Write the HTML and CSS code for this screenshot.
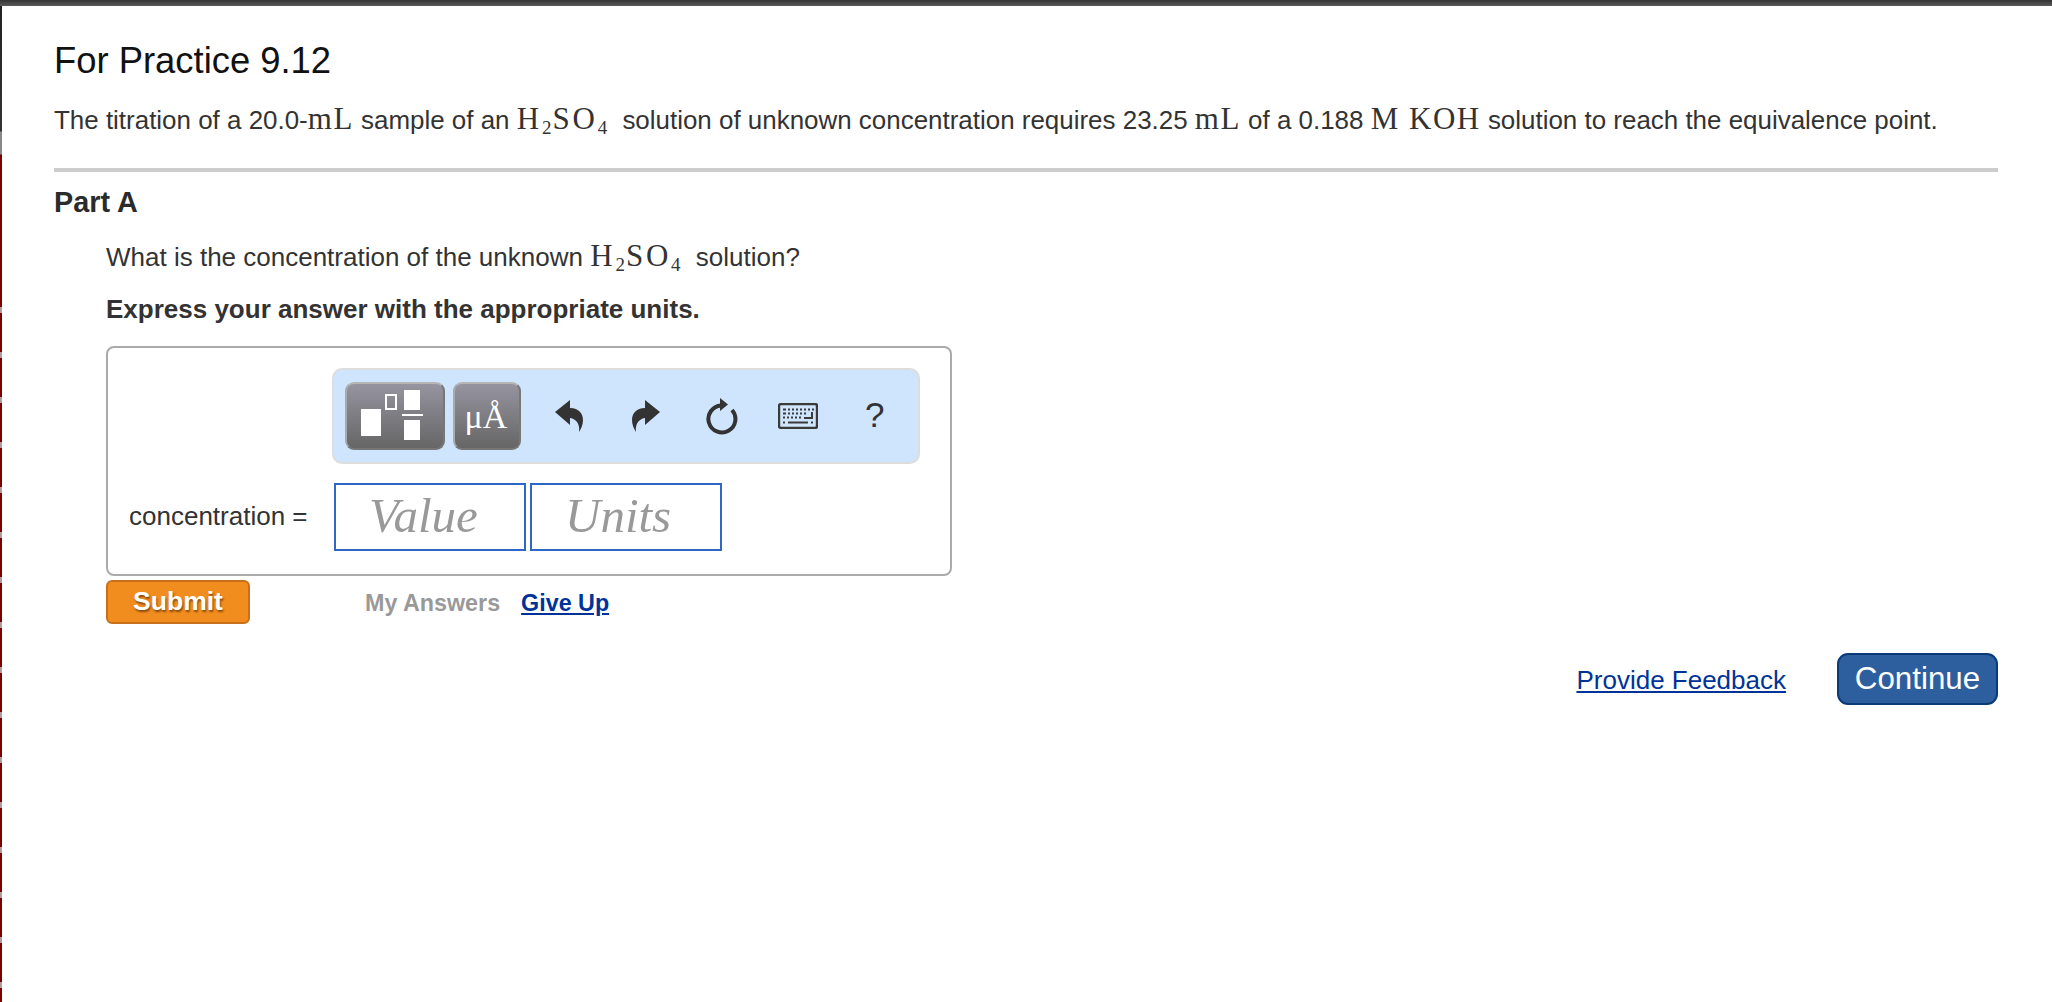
FILE: index.html
```html
<!DOCTYPE html>
<html lang="en">
<head>
<meta charset="utf-8">
<title>For Practice 9.12</title>
<link rel="stylesheet" href="styles.css">
</head>
<body>
<div class="topbar"></div>
<div class="shell">
  <div class="edge"></div>
  <main class="main">
    <h1 class="title">For Practice 9.12</h1>
    <p class="intro">The titration of a 20.0-<span class="m">mL</span> sample of an <span class="m f">H<sub>2</sub>SO<sub>4</sub></span> solution of unknown concentration requires 23.25 <span class="m">mL</span> of a 0.188 <span class="m">M KOH</span> solution to reach the equivalence point.</p>
    <hr class="rule">
    <h2 class="part">Part A</h2>
    <section class="question">
      <p class="ask">What is the concentration of the unknown <span class="m f">H<sub>2</sub>SO<sub>4</sub></span> solution?</p>
      <p class="express">Express your answer with the appropriate units.</p>
      <div class="answer">
        <div class="toolbar">
          <div class="tbtn tbtn-wide">
            <svg width="96" height="64" viewBox="0 0 96 64"><rect x="14" y="25" width="20" height="27" fill="#fff"/><rect x="39" y="11" width="10" height="14" fill="none" stroke="#fff" stroke-width="2"/><rect x="57" y="6" width="16" height="20" fill="#fff"/><rect x="55" y="30" width="21" height="2" fill="#fff"/><rect x="57" y="36" width="16" height="20" fill="#fff"/></svg>
          </div>
          <div class="tbtn tbtn-unit">μÅ</div>
          <svg class="ic ic-undo" width="30" height="34" viewBox="0 0 30 34"><path d="M1 13 16 1v8c9 0 13 6 13 12 0 5-2 9-4 12 1-7-2-13-9-14v7z" fill="#333"/></svg>
          <svg class="ic ic-redo" width="30" height="34" viewBox="0 0 30 34"><path d="M29 13 14 1v8C5 9 1 15 1 21c0 5 2 9 4 12-1-7 2-13 9-14v7z" fill="#333"/></svg>
          <svg class="ic ic-reset" width="36" height="40" viewBox="0 0 36 40"><path d="M29 14A13.5 13.5 0 1 1 18 9.5" fill="none" stroke="#333" stroke-width="4"/><path d="M17 2l8 6.5-8 6.5z" fill="#333"/></svg>
          <svg class="ic ic-kbd" width="40" height="26" viewBox="0 0 40 26"><rect x="1" y="1" width="38" height="24" rx="2" fill="#cfe4fd" stroke="#3a3a3a" stroke-width="2.4"/><path d="M5 6.5h3M10 6.5h2M14 6.5h2M18 6.5h2M22 6.5h2M26 6.5h2M30 6.5h2M34 6.5h2M5 10.5h3M10 10.5h2M14 10.5h2M18 10.5h2M22 10.5h2M26 10.5h2M5 14.5h2M9 14.5h2M13 14.5h2M17 14.5h2M21 14.5h2M34 9v6h-8M5 19.5h2M10 19.5h20M33 19.5h2" stroke="#3a3a3a" stroke-width="2" fill="none"/></svg>
          <span class="help">?</span>
        </div>
        <div class="entry">
          <span class="label">concentration =</span>
          <span class="field">Value</span>
          <span class="field">Units</span>
        </div>
      </div>
      <div class="actions">
        <button class="submit" type="button">Submit</button>
        <span class="myanswers">My Answers</span>
        <a class="giveup" href="#">Give Up</a>
      </div>
    </section>
    <div class="footer">
      <a class="feedback" href="#">Provide Feedback</a>
      <button class="continue" type="button">Continue</button>
    </div>
  </main>
</div>
</body>
</html>
```

FILE: styles.css
```css
* { box-sizing: border-box; }
html, body { margin: 0; padding: 0; height: 1002px; overflow: hidden; background: #fff; }
body { font-family: "Liberation Sans", Arial, sans-serif; color: #333; }
.topbar { height: 6px; background: linear-gradient(#333, #5a5a5a); }
.shell { display: flex; height: 996px; }
.edge {
  width: 2px; flex: none;
  background:
    repeating-linear-gradient(#7a0000 0, #7a0000 39px, #b09a9a 39px, #b09a9a 45px) 0 262px / 2px 100% no-repeat,
    linear-gradient(#222 0, #333 125px, #888 126px, #888 148px, #7a0000 149px, #7a0000 100%);
}
.main { flex: 1; padding: 0 54px 0 52px; display: flex; flex-direction: column; align-items: stretch; }
.title { margin: 34px 0 0; font-size: 36.4px; line-height: 42px; font-weight: 400; color: #111; }
.intro { margin: 20px 0 0; font-size: 25.95px; line-height: 34px; white-space: nowrap; }
.m { font-family: "Liberation Serif", serif; font-size: 31px; letter-spacing: 1.5px; }
.m sub { font-size: 19px; line-height: 0; vertical-align: -5px; letter-spacing: 1px; }
.f { padding-right: 7px; letter-spacing: 2.8px; }
.rule { margin: 31px 0 0; border: 0; height: 4px; background: #ccc; }
.part { margin: 14px 0 0; font-size: 28.8px; line-height: 32px; font-weight: 700; color: #2b2b2b; }
.question { padding-left: 52px; }
.ask { margin: 21px 0 0; font-size: 26px; line-height: 34px; white-space: nowrap; }
.express { margin: 18px 0 0; font-size: 26px; line-height: 34px; font-weight: 700; }
.answer { margin-top: 20px; width: 846px; height: 230px; border: 2px solid #aaa; border-radius: 8px; padding: 20px 0 0 21px; }
.toolbar { margin-left: 203px; width: 588px; height: 96px; background: #cfe4fd; border: 2px solid #ddd; border-radius: 10px; display: flex; align-items: center; padding: 0 0 0 11px; }
.tbtn { height: 68px; border-radius: 9px; background: linear-gradient(#96949f, #666); border: 2px solid; border-color: #b5b5b5 #777 #777 #aaa; color: #fff; display: flex; align-items: center; justify-content: center; flex: none; }
.tbtn-wide { width: 100px; }
.tbtn-unit { width: 68px; margin-left: 8px; padding-right: 2px; font-family: "Liberation Serif", serif; font-size: 34px; line-height: 1; padding-top: 2px; }
.ic { flex: none; display: block; }
.ic-undo { margin-left: 33px; }
.ic-redo { margin-left: 47px; }
.ic-reset { margin-left: 42px; }
.ic-kbd { margin-left: 39px; }
.help { margin-left: 47px; font-size: 35px; line-height: 1; color: #333; margin-top: -4px; }
.entry { display: flex; align-items: center; margin-top: 19px; }
.label { width: 205px; flex: none; font-size: 26px; color: #333; white-space: nowrap; padding-bottom: 2px; }
.field { width: 192px; height: 68px; border: 2px solid #2f67c8; margin-right: 4px; padding-left: 33px; font-family: "Liberation Serif", serif; font-style: italic; font-size: 49px; line-height: 62px; color: #999; background: #fff; }
.actions { display: flex; align-items: center; margin-top: 4px; }
.submit { width: 144px; height: 44px; border: 2px solid #c96f1c; border-radius: 6px; background: #f18d1e; color: #fff; font: 700 26.5px "Liberation Sans", Arial, sans-serif; text-shadow: 1px 2px 2px #8a4a10; padding: 0 0 2px; }
.myanswers { margin-left: 115px; margin-top: 2px; font-size: 23.3px; font-weight: 700; color: #999; }
.giveup { margin-left: 21px; margin-top: 2px; font-size: 23.3px; font-weight: 700; color: #003399; text-decoration: underline; }
.footer { display: flex; justify-content: flex-end; align-items: center; margin-top: 29px; }
.feedback { font-size: 26px; color: #003399; text-decoration: underline; margin-top: 2px; }
.continue { width: 161px; height: 52px; margin-left: 51px; border: 2px solid #0b3a78; border-radius: 11px; background: #2d5f9e; color: #fff; font: 400 31.3px "Liberation Sans", Arial, sans-serif; padding: 0; }
```
